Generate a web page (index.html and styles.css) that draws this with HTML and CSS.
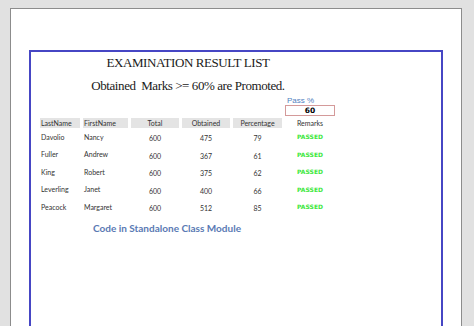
FILE: index.html
```html
<!DOCTYPE html>
<html>
<head>
<meta charset="utf-8">
<link rel="stylesheet" href="styles.css">
</head>
<body>
<div class="page">
  <div class="frame">
    <div class="content">
      <div class="title">EXAMINATION RESULT LIST</div>
      <div class="subtitle">Obtained&nbsp; Marks &gt;= 60% are Promoted.</div>
      <div class="grid">
        <div class="pass">
          <div class="pass-label">Pass %</div>
          <div class="pass-box">60</div>
        </div>
        <div class="hd left">LastName</div>
        <div class="hd left">FirstName</div>
        <div class="hd">Total</div>
        <div class="hd">Obtained</div>
        <div class="hd">Percentage</div>
        <div class="hd nobg">Remarks</div>

        <div class="c left">Davolio</div><div class="c left">Nancy</div><div class="c num">600</div><div class="c num">475</div><div class="c num">79</div><div class="c ok">PASSED</div>
        <div class="c left">Fuller</div><div class="c left">Andrew</div><div class="c num">600</div><div class="c num">367</div><div class="c num">61</div><div class="c ok">PASSED</div>
        <div class="c left">King</div><div class="c left">Robert</div><div class="c num">600</div><div class="c num">375</div><div class="c num">62</div><div class="c ok">PASSED</div>
        <div class="c left">Leverling</div><div class="c left">Janet</div><div class="c num">600</div><div class="c num">400</div><div class="c num">66</div><div class="c ok">PASSED</div>
        <div class="c left">Peacock</div><div class="c left">Margaret</div><div class="c num">600</div><div class="c num">512</div><div class="c num">85</div><div class="c ok">PASSED</div>
      </div>
      <div class="note">Code in Standalone Class Module</div>
    </div>
  </div>
</div>
</body>
</html>
```

FILE: styles.css
```css
html, body {
  margin: 0;
  padding: 0;
  background: #e1e1e1;
  height: 326px;
  overflow: hidden;
}
.page {
  margin: 8px 0 0 10px;
  width: 452px;
  height: 318px;
  overflow: hidden;
  background: #fff;
  border: 1px solid #8c8c8c;
  border-bottom: none;
  padding: 41px 0 0 18px;
  box-sizing: border-box;
}
.frame {
  width: 414px;
  height: 290px;
  border: 2px solid #4646c4;
  box-sizing: border-box;
  padding: 3px 0 0 9px;
}
.content {
  width: 296px;
  display: flex;
  flex-direction: column;
}
.title,
.subtitle {
  font-family: "Liberation Serif", serif;
  font-size: 13px;
  letter-spacing: -0.42px;
  line-height: 16px;
  color: #1a1a1a;
  text-align: center;
}
.subtitle {
  margin-top: 7px;
}
.grid {
  display: grid;
  grid-template-columns: 40px 45px 48px 48px 49px 50px;
  column-gap: 3px;
  grid-auto-rows: 17.5px;
  grid-template-rows: 22px 10px;
  margin-top: 2px;
  font-family: Lato, "Open Sans", sans-serif;
  font-size: 7px;
  color: #333;
}
.pass {
  grid-column: 6;
  display: flex;
  flex-direction: column;
}
.pass-label {
  font-family: "Liberation Sans", sans-serif;
  font-size: 8px;
  line-height: 9px;
  color: #4f7fc0;
  padding-left: 2px;
}
.pass-box {
  height: 11px;
  box-sizing: border-box;
  border: 1px solid #d49a9a;
  font-family: "DejaVu Sans", sans-serif;
  font-weight: bold;
  font-size: 7.5px;
  line-height: 9px;
  text-align: center;
  color: #000;
}
.hd {
  background: #e4e4e4;
  line-height: 10px;
  text-align: center;
  font-size: 7px;
}
.hd.left {
  text-align: left;
  padding-left: 1px;
}
.hd.nobg {
  background: none;
}
.c {
  display: flex;
  align-items: center;
  justify-content: center;
}
.c.left {
  justify-content: flex-start;
  padding-left: 1px;
}
.c.num {
  padding-top: 3px;
}
.c.ok {
  font-family: "DejaVu Sans", sans-serif;
  font-weight: bold;
  font-size: 6px;
  color: #3be83b;
}
.note {
  font-family: Lato, "Open Sans", sans-serif;
  font-weight: bold;
  font-size: 10px;
  color: #5a7ab4;
  margin: 6px 0 0 53px;
}
```
